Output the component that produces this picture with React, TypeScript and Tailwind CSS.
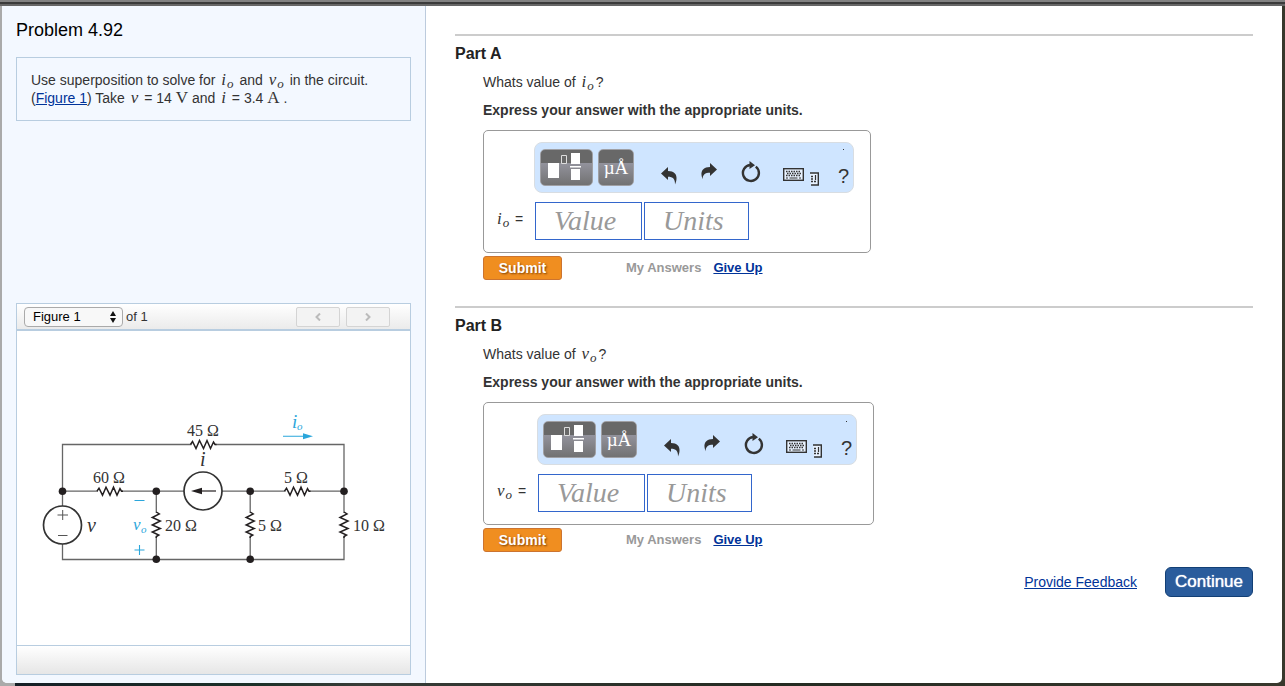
import React from "react";

function MathVar({ name, sub }: { name: string; sub?: string }) {
  return (
    <span className="mx-[2px] font-['Liberation_Serif',serif] text-[17px] leading-none italic">
      {name}
      {sub && <sub className="bottom-[-3px] ml-px text-[13px]">{sub}</sub>}
    </span>
  );
}

function ZigZag({ x, y, vertical = false }: { x: number; y: number; vertical?: boolean }) {
  return (
    <g transform={`translate(${x} ${y})${vertical ? " rotate(90)" : ""}`}>
      <path d="M-12 0H12" stroke="#fff" strokeWidth="3" />
      <path
        d="M-13 0L-11 -3L-7.500 4L-4 -4L0 4L3.500 -4L7 4L10 -2.500L11.500 0H13"
        stroke="#231f20"
        strokeWidth="1.500"
        fill="none"
      />
    </g>
  );
}

function Circuit() {
  return (
    <svg
      viewBox="17 331 393 314"
      className="block h-auto w-full font-['Liberation_Serif',serif] text-[16px]"
      role="img"
      aria-label="Circuit diagram"
    >
      <g stroke="#666" strokeWidth="1.300" fill="none">
        <path d="M62.500 559.500V444.500H344V559.500Z" />
        <path d="M62.500 491.200H344M156.300 491.200V559.500M250.200 491.200V559.500" />
      </g>
      <ZigZag x={203.5} y={444.5} />
      <ZigZag x={110} y={491.2} />
      <ZigZag x={297.5} y={491.2} />
      <ZigZag x={156.3} y={525} vertical />
      <ZigZag x={250.2} y={525} vertical />
      <ZigZag x={344} y={525} vertical />
      <g fill="#fff" stroke="#333" strokeWidth="1.700">
        <circle cx="203" cy="491" r="19" />
        <circle cx="62.500" cy="525" r="19" />
      </g>
      <g fill="#231f20">
        <circle cx="62.500" cy="491.200" r="3.800" />
        <circle cx="156.300" cy="491.200" r="3.800" />
        <circle cx="250.200" cy="491.200" r="3.800" />
        <circle cx="344" cy="491.200" r="3.800" />
        <circle cx="156.300" cy="559.300" r="3.800" />
        <circle cx="250.200" cy="559.300" r="3.800" />
        <path d="M191 491l11 -3.200v6.400z" />
      </g>
      <path d="M200 491H216" stroke="#231f20" strokeWidth="1.200" />
      <path d="M57.500 515H68M62.700 510V520M58 535.500H67.500" stroke="#555" />
      <g fill="#333">
        <text x="187" y="436">45 Ω</text>
        <text x="93" y="483">60 Ω</text>
        <text x="284" y="483">5 Ω</text>
        <text x="165" y="531">20 Ω</text>
        <text x="258" y="531">5 Ω</text>
        <text x="353" y="531">10 Ω</text>
        <g fontStyle="italic" fontSize="20">
          <text x="200" y="466">i</text>
          <text x="87" y="532">v</text>
        </g>
      </g>
      <g fill="#2ba6db" fontStyle="italic">
        <text x="292" y="428" fontSize="19">i</text>
        <text x="297" y="430" fontSize="11">o</text>
        <text x="133" y="530" fontSize="17">v</text>
        <text x="141" y="533" fontSize="11">o</text>
        <path d="M313 436.300l-10 -3v6z" />
      </g>
      <path
        d="M283 436.300H304M134.500 500.500H144.500M134.500 550H144.500M139.500 545V555"
        stroke="#2ba6db"
        strokeWidth="1.100"
      />
    </svg>
  );
}

function UndoIcon() {
  return (
    <svg viewBox="0 0 16 18" className="h-[18px] w-4" fill="#333">
      <path d="M0 6.500L7 0v4c6 0 9 3 8.500 8c-.2 2-.6 3.500-1.500 5.500c.2-5.500-2-7.800-7-7.800V13z" />
    </svg>
  );
}

function RedoIcon() {
  return (
    <svg viewBox="0 0 16 18" className="h-[18px] w-4" fill="#333">
      <path d="M16 6.500L9 0v4C3 4 0 7 .5 12c.2 1.600.5 2.600 1.200 4.200C1.600 11.500 4 9.700 9 9.700V13z" />
    </svg>
  );
}

function ResetIcon() {
  return (
    <svg viewBox="0 0 20 22" className="h-[22px] w-5">
      <path d="M14.800 5.600A8 8 0 1 1 9 4" fill="none" stroke="#333" strokeWidth="2.400" />
      <path d="M8.500 0L14 4.300L8.500 8z" fill="#333" />
    </svg>
  );
}

function KeyboardIcon() {
  return (
    <svg viewBox="0 0 21 13" className="h-[13px] w-[21px]">
      <rect x=".7" y=".7" width="19.600" height="11.600" fill="#e8f2ff" stroke="#333" strokeWidth="1.400" />
      <path d="M3 3.500H18M4 5.500H18M3 7.500H18" stroke="#333" strokeWidth="1.300" strokeDasharray="1.500 1" />
      <path d="M3 10H5M6.500 10H14.500M16 10H18" stroke="#333" strokeWidth="1.200" />
    </svg>
  );
}

function KeypadIcon() {
  return (
    <svg viewBox="0 0 10 14" className="h-[14px] w-[10px]">
      <path d="M0 1H8.300V13H1" fill="#e8f2ff" stroke="#333" strokeWidth="1.400" />
      <path d="M1 4.500H3M1 7H3M1 9.500H6" stroke="#333" strokeWidth="1.400" strokeDasharray="2 1" />
      <path d="M5.500 3V8" stroke="#333" strokeWidth="1.200" />
    </svg>
  );
}

const toolButton =
  "flex h-[37px] justify-center rounded-[5px] border border-[#a0a0a4] bg-[linear-gradient(#686868_0_38%,#92929c_38%,#727272)]";

function Toolbar() {
  return (
    <div className="flex h-[51px] items-start rounded-[8px] border border-[#d8dde2] bg-[#cfe5ff] pt-[6px] pl-[5px]">
      <button type="button" aria-label="Templates" className={toolButton + " w-[53px] pt-px"}>
        <svg viewBox="0 0 49 33" className="h-[33px] w-[49px]">
          <path d="M6 12h11v15h-11zM29 2h9v11h-9zM28 15h11v1.500h-11zM29 18h9v11h-9z" fill="#fff" />
          <path d="M19.500 4.500h5v8h-5z" fill="none" stroke="#ddd" />
        </svg>
      </button>
      <button
        type="button"
        aria-label="Symbols"
        className={toolButton + " ml-[5px] w-9 font-['Liberation_Serif',serif] text-[19px] leading-[35px] text-white"}
      >
        µÅ
      </button>
      <button type="button" aria-label="Undo" className="mt-[18px] ml-[27px]">
        <UndoIcon />
      </button>
      <button type="button" aria-label="Redo" className="mt-[14px] ml-6">
        <RedoIcon />
      </button>
      <button type="button" aria-label="Reset" className="mt-[12px] ml-6">
        <ResetIcon />
      </button>
      <button type="button" aria-label="Keyboard shortcuts" className="mt-[19px] ml-[22px] flex items-start gap-[6px]">
        <KeyboardIcon />
        <span className="pt-1">
          <KeypadIcon />
        </span>
      </button>
      <button type="button" aria-label="Help" className="relative mt-[16px] ml-[18px] text-[20px] leading-[22px] text-[#333]">
        ?
        <span className="absolute top-[-16px] left-[5px] size-px bg-[#333]" />
      </button>
    </div>
  );
}

function Part({ letter, variable, labelWidth }: { letter: string; variable: string; labelWidth: string }) {
  const field =
    "h-[38px] border border-[#3366cc] bg-white pl-[18px] font-['Liberation_Serif',serif] text-[28px] italic placeholder:text-[#999]";
  return (
    <section className="h-[272px] border-t-2 border-[#ccc] pt-[8px]">
      <h2 className="text-[16px] leading-5 font-bold text-[#222]">Part {letter}</h2>
      <div className="pl-[28px]">
        <p className="mt-[8px] text-[14px] leading-[20px]">
          Whats value of <MathVar name={variable} sub="o" />?
        </p>
        <p className="mt-[8px] text-[14px] leading-5 font-bold">Express your answer with the appropriate units.</p>
        <div className="mt-[10px] w-fit rounded-[5px] border border-[#999] pt-[11px] pr-4 pb-3 pl-[11px]">
          <div className="flex">
            <div className={labelWidth} />
            <div className="w-[320px]">
              <Toolbar />
            </div>
          </div>
          <div className="mt-[9px] flex">
            <label htmlFor={"value" + letter} className={labelWidth + " pt-[7px] text-[14px] leading-5"}>
              <MathVar name={variable} sub="o" /> =
            </label>
            <div className="flex gap-[2px] pl-px">
              <input id={"value" + letter} placeholder="Value" className={field + " w-[107px]"} />
              <input aria-label="Units" placeholder="Units" className={field + " w-[105px]"} />
            </div>
          </div>
        </div>
        <div className="mt-[3px] flex items-center text-[13px] font-bold">
          <button
            type="button"
            className="h-[24px] w-[79px] rounded-[3px] border border-[#cc7430] bg-[#f08e20] text-[14px] text-white [text-shadow:1px_1px_2px_#804000]"
          >
            Submit
          </button>
          <span className="ml-16 text-[#999]">My Answers</span>
          <a href="#give-up" className="ml-3 text-[#003399] underline">
            Give Up
          </a>
        </div>
      </div>
    </section>
  );
}

const pager =
  "flex h-[20px] w-[44px] items-center justify-center rounded-[2px] border border-[#d4d4d4] bg-[#f3f3f3]";

export default function App() {
  return (
    <div className="flex min-h-screen flex-col bg-[linear-gradient(90deg,#aaa_0_15px,#151e25_15px,#1c3028_20%,#383c38_28%,#242b22_60%,#38382c)] font-['Liberation_Sans',Arial,sans-serif] text-[#333]">
      <div className="h-[6px] shrink-0 bg-[linear-gradient(#828282_0_2px,#3b3b3b_2px_4px,#666_4px)]" />
      <div className="mr-[3px] mb-[3px] ml-[2px] flex grow overflow-hidden rounded-b-[5px] bg-white">
        <aside className="flex w-[424px] shrink-0 flex-col border-r border-[#bccbdd] bg-[#f3f8ff] px-[14px] pt-[12px] pb-[8px]">
          <h1 className="text-[18px] leading-[25px] text-black">Problem 4.92</h1>
          <div className="mt-[14px] h-16 border border-[#b8cde0] px-[14px] pt-[13px] text-[14px] leading-[17px]">
            <p>
              Use superposition to solve for <MathVar name="i" sub="o" /> and <MathVar name="v" sub="o" /> in the circuit.
            </p>
            <p>
              (
              <a href="#figure" className="text-[#003399] underline">
                Figure 1
              </a>
              ) Take <MathVar name="v" /> = 14 <span className="font-['Liberation_Serif',serif] text-[17px] leading-none">V</span> and{" "}
              <MathVar name="i" /> = 3.4 <span className="font-['Liberation_Serif',serif] text-[17px] leading-none">A</span> .
            </p>
          </div>
          <div id="figure" className="mt-auto border border-[#b8cde0] bg-white">
            <div className="flex h-[27px] items-center border-b-2 border-[#b8cde0] bg-linear-to-b from-white to-[#ebebeb] pr-5 pl-[7px] text-[13px]">
              <div className="relative">
                <select
                  aria-label="Figure"
                  className="block h-[20px] w-[99px] appearance-none rounded-[4px] border border-[#aaa] bg-[#f8f8f8] pl-2 text-[13px] leading-4 text-black"
                >
                  <option>Figure 1</option>
                </select>
                <svg viewBox="0 0 6 12" className="pointer-events-none absolute top-1 right-[7px] h-3 w-[6px]">
                  <path d="M3 0L6 5H0zM3 12L0 7H6z" fill="#111" />
                </svg>
              </div>
              <span className="ml-[3px]">of 1</span>
              <button type="button" aria-label="Previous figure" className={pager + " ml-auto"}>
                <svg viewBox="0 0 6 8" className="h-2 w-[6px]" fill="none" stroke="#bbb" strokeWidth="2">
                  <path d="M5 .5L1.500 4L5 7.500" />
                </svg>
              </button>
              <button type="button" aria-label="Next figure" className={pager + " ml-[6px]"}>
                <svg viewBox="0 0 6 8" className="h-2 w-[6px]" fill="none" stroke="#bbb" strokeWidth="2">
                  <path d="M1 .5L4.500 4L1 7.500" />
                </svg>
              </button>
            </div>
            <Circuit />
            <div className="h-[29px] border-t border-[#b8cde0] bg-linear-to-b from-white to-[#e6e6e6]" />
          </div>
        </aside>
        <main className="grow px-[29px] pt-[28px]">
          <Part letter="A" variable="i" labelWidth="w-[39px]" />
          <Part letter="B" variable="v" labelWidth="w-[42px]" />
          <div className="-mt-[11px] flex items-center justify-end gap-7">
            <a href="#feedback" className="text-[14px] text-[#003399] underline">
              Provide Feedback
            </a>
            <button
              type="button"
              className="h-[30px] w-[88px] rounded-[6px] border border-[#123f75] bg-[#2a5c9c] text-[17px] text-white [text-shadow:0_0_1px_#fff]"
            >
              Continue
            </button>
          </div>
        </main>
      </div>
    </div>
  );
}
